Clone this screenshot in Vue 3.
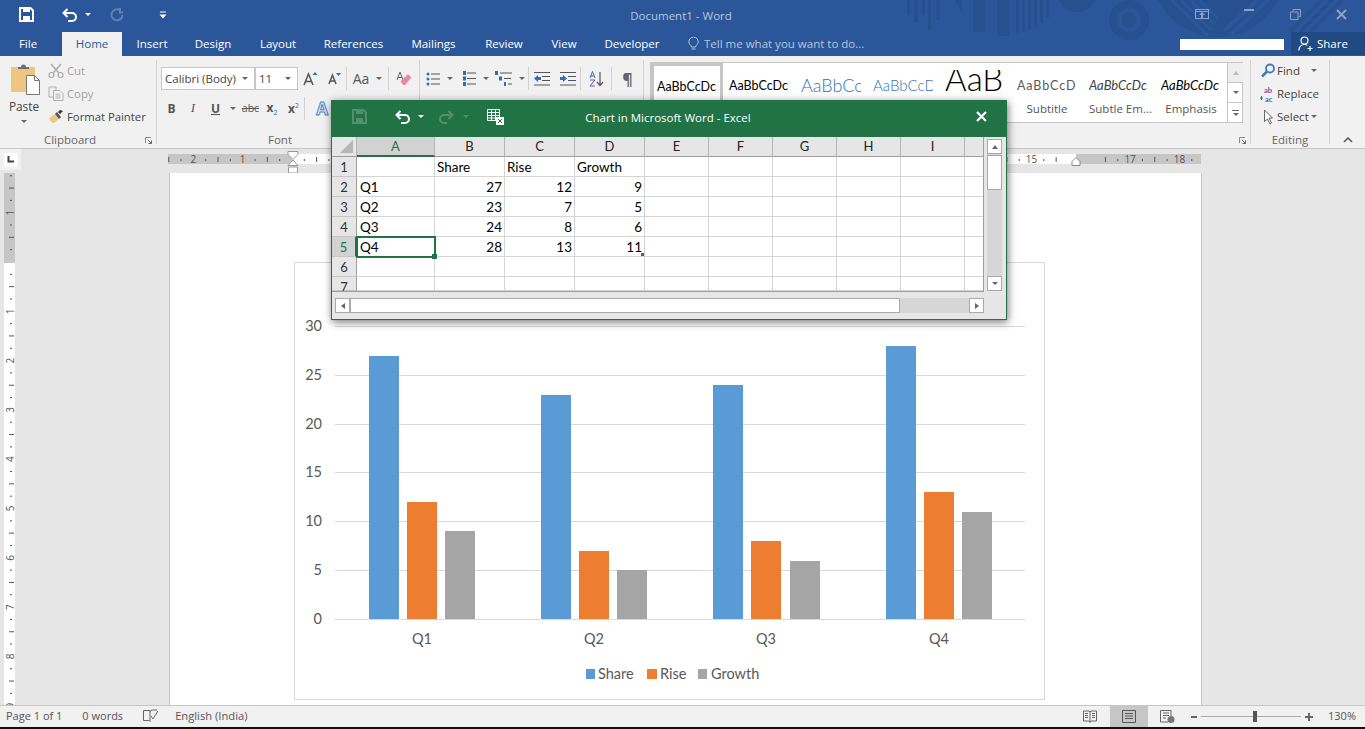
<script setup>
const tabs = ['File', 'Home', 'Insert', 'Design', 'Layout', 'References', 'Mailings', 'Review', 'View', 'Developer']

const styles = [
  { id: 1, name: '', text: 'AaBbCcDc', cls: 'st-normal sel' },
  { id: 2, name: '', text: 'AaBbCcDc', cls: 'st-normal' },
  { id: 3, name: '', text: 'AaBbCc', cls: 'st-h1' },
  { id: 4, name: '', text: 'AaBbCcD', cls: 'st-h2' },
  { id: 5, name: '', text: 'AaB', cls: 'st-title' },
  { id: 6, name: 'Subtitle', text: 'AaBbCcD', cls: 'st-sub' },
  { id: 7, name: 'Subtle Em...', text: 'AaBbCcDc', cls: 'st-em st-subtle' },
  { id: 8, name: 'Emphasis', text: 'AaBbCcDc', cls: 'st-em' }
]

function hTicks() {
  const out = []
  for (let k = -10; k <= 73; k++) {
    const x = 292 + k * 12.325
    if (k === 0 || k === 64 || k === 63 || k === 65) continue
    if (k % 4 === 0) {
      if (x < 331 || x > 1007) out.push({ x, label: Math.abs(k / 4) })
    } else if (k % 2 === 0) out.push({ x, long: true })
    else out.push({ x })
  }
  return out
}
function vTicks() {
  const out = []
  for (let k = -7; k <= 36; k++) {
    const y = 262 + k * 12.325
    if (k === 0) continue
    if (k % 4 === 0) out.push({ y, label: Math.abs(k / 4) })
    else if (k % 2 === 0) out.push({ y, long: true })
    else out.push({ y })
  }
  return out
}
const rulerH = hTicks()
const rulerV = vTicks()

const columns = ['A', 'B', 'C', 'D', 'E', 'F', 'G', 'H', 'I', '']
const sheet = [
  ['', 'Share', 'Rise', 'Growth'],
  ['Q1', 27, 12, 9],
  ['Q2', 23, 7, 5],
  ['Q3', 24, 8, 6],
  ['Q4', 28, 13, 11],
  [],
  []
]
function cellsOf(row) {
  return columns.map((_, i) => (row[i] === undefined ? '' : row[i]))
}

const groups = [
  { label: 'Q1', xs: [369, 407, 445], values: [27, 12, 9] },
  { label: 'Q2', xs: [541, 579, 617], values: [23, 7, 5] },
  { label: 'Q3', xs: [713, 751, 790], values: [24, 8, 6] },
  { label: 'Q4', xs: [886, 924, 962], values: [28, 13, 11] }
]
const seriesColors = ['#5b9bd5', '#ed7d31', '#a5a5a5']
const zero = 619
const gridValues = [30, 25, 20, 15, 10, 5, 0]
function gridY(v) {
  return Math.round(zero - v * 9.77) + 0.5
}
function barTop(v) {
  return Math.round(zero - v * 9.75)
}
const decoBars = [
  [907, 3, 15], [914, 4, 23], [922, 3, 15], [928, 3, 30], [936, 4, 20],
  [973, 12, 32], [997, 12, 36], [1016, 3, 34], [1022, 3, 32], [1028, 3, 30], [1034, 3, 27], [1040, 3, 23], [1046, 3, 18]
]
</script>

<template>
  <div class="word">
    <header class="top">
      <svg class="deco" width="475" height="56" viewBox="890 0 475 56">
        <g fill="#26508f">
          <rect v-for="b in decoBars" :key="b[0]" :x="b[0]" y="0" :width="b[1]" :height="b[2]" />
          <polygon points="955,0 962,0 962,12" />
          <circle cx="1077" cy="-8" r="20" />
          <circle cx="1218" cy="-30" r="67" />
        </g>
        <circle cx="1129" cy="20" r="16" fill="none" stroke="#26508f" stroke-width="8" />
        <circle cx="1129" cy="20" r="7.500" fill="#26508f" />
        <g stroke="#2b579a" stroke-width="3">
          <path d="M1172 0l36 36M1181 0l30 30M1190 0l24 24M1199 0l18 18" />
          <path d="M1268 0l-40 37M1258 0l-34 31" stroke-width="4" />
        </g>
        <g stroke="#26508f" stroke-width="4">
          <path d="M1300 32L1336 -4M1310 32L1346 -4M1290 32L1326 -4" />
        </g>
      </svg>

      <div class="titlebar">
        <div class="qat">
          <svg class="q-save" width="15" height="15" viewBox="0 0 15 15"><path d="M1 1h10.5L14 3.5V14H1z" fill="none" stroke="#fff" stroke-width="2" /><rect x="4" y="1" width="7" height="4" fill="#fff" /><rect x="4" y="9" width="7" height="5" fill="#fff" /></svg>
          <svg class="q-undo" width="15" height="14" viewBox="0 0 15 14"><path d="M5.5 1L1.5 5l4 4M2 5h8a3.6 3.6 0 0 1 0 8H6" fill="none" stroke="#fff" stroke-width="2" /></svg>
          <span class="caret white q-caret"></span>
          <svg class="q-redo" width="14" height="14" viewBox="0 0 14 14"><path d="M10 2.2A5.5 5.5 0 1 0 12.5 7M10 0v4.5h3" fill="none" stroke="#5f80b3" stroke-width="2" /></svg>
          <svg class="q-more" width="8" height="8" viewBox="0 0 8 8"><path d="M1 1h6" stroke="#fff" stroke-width="1" /><path d="M0.5 3.5h7L4 7.5z" fill="#fff" /></svg>
        </div>
        <div class="doc-title">Document1 - Word</div>
        <div class="win-controls">
          <span class="ctl"><svg width="14" height="11" viewBox="0 0 14 11"><rect x=".5" y=".5" width="13" height="9" fill="none" stroke="#8aa3c8" /><path d="M0 2.5h14" stroke="#8aa3c8" /><path d="M7 3l3 3H8v3H6V6H4z" fill="#8aa3c8" /></svg></span>
          <span class="ctl"><svg width="10" height="2" viewBox="0 0 10 2"><rect width="10" height="2" fill="#8aa3c8" /></svg></span>
          <span class="ctl"><svg width="11" height="11" viewBox="0 0 11 11"><path d="M3 2.5V.5h7.5v7H8.5M.5 3h7.5v7.5H.5z" fill="none" stroke="#8aa3c8" /></svg></span>
          <span class="ctl"><svg width="11" height="11" viewBox="0 0 11 11"><path d="M1 1l9 9M10 1l-9 9" stroke="#8aa3c8" stroke-width="2" /></svg></span>
        </div>
      </div>

      <div class="tabrow">
        <nav class="tabs">
          <span v-for="t in tabs" :key="t" class="tab" :class="{ active: t === 'Home', file: t === 'File' }">{{ t }}</span>
        </nav>
        <div class="tell">
          <svg width="11" height="14" viewBox="0 0 11 14"><path d="M3.5 10C3 8 .8 7.2.8 4.8a4.7 4.7 0 0 1 9.4 0C10.200 7.200 8 8 7.500 10zM3.500 12h4" fill="none" stroke="#b4c5df" /></svg>
          <span>Tell me what you want to do...</span>
        </div>
        <div class="redact"></div>
        <div class="share">
          <svg width="15" height="15" viewBox="0 0 15 15"><circle cx="6.500" cy="4.500" r="3.500" fill="none" stroke="#fff" stroke-width="1.200" /><path d="M.8 14.500c.4-4 2.600-6 5.700-6 1 0 2 .2 2.700.7M9.500 12.500h5M12 10v5" fill="none" stroke="#fff" stroke-width="1.200" /></svg>
          <span>Share</span>
        </div>
      </div>
    </header>

    <section class="ribbon">
      <div class="group g-clip">
        <div class="g-body clip-body">
          <div class="paste">
            <svg width="31" height="31" viewBox="0 0 31 31">
              <rect x="1" y="3" width="24" height="25" rx="1" fill="#eec680" />
              <path d="M8 5V3h3a2.500 2.500 0 0 1 5 0h3v2z" fill="#6e6e6e" />
              <path d="M16.500 11.500h8l5 5v14h-13z" fill="#fff" stroke="#777" />
              <path d="M24.500 11.500v5h5" fill="none" stroke="#777" />
            </svg>
            <span class="paste-label">Paste</span>
            <span class="caret"></span>
          </div>
          <div class="clip-list">
            <div class="mini dim">
              <svg width="16" height="15" viewBox="0 0 16 15"><path d="M3 1l8 9M13 1l-8 9" stroke="#a8a8a8" stroke-width="1.300" /><circle cx="3.500" cy="12" r="2.500" fill="none" stroke="#a8a8a8" stroke-width="1.200" /><circle cx="12.500" cy="12" r="2.500" fill="none" stroke="#a8a8a8" stroke-width="1.200" /></svg>
              <span>Cut</span>
            </div>
            <div class="mini dim">
              <svg width="16" height="15" viewBox="0 0 16 15"><path d="M1 1h7v3M5 11H1V1" fill="none" stroke="#b0b0b0" /><path d="M5.500 4.500H12l3 3v7H5.500z" fill="#f4f4f4" stroke="#b0b0b0" /><path d="M7.500 8h5M7.500 10h5M7.500 12h5" stroke="#b0b0b0" /></svg>
              <span>Copy</span>
            </div>
            <div class="mini">
              <svg width="16" height="15" viewBox="0 0 16 15"><path d="M1 9l6-4 4 5-5 4C4 14 2 12 1 9z" fill="#eec680" /><path d="M7 5l4 5 2-2-4-5z" fill="#555" /><path d="M10 3l2-2 3 1-3 3z" fill="#333" /></svg>
              <span>Format Painter</span>
            </div>
          </div>
        </div>
        <div class="g-label l-clip">Clipboard
          <svg class="launcher" width="7" height="7" viewBox="0 0 7 7"><path d="M.5 6V.5H6" fill="none" stroke="#888" /><path d="M3 3l3.500 3.500M6.500 3.500v3h-3" fill="none" stroke="#666" /></svg>
        </div>
      </div>

      <div class="group g-font">
        <div class="g-body">
          <div class="f-row1">
            <div class="combo"><span>Calibri (Body)</span><span class="caret"></span></div>
            <div class="combo combo-size"><span>11</span><span class="caret"></span></div>
            <span class="btn">
              <svg width="16" height="15" viewBox="0 0 16 15"><path d="M1 14L5.500 3 10 14M2.800 10.500h5.400" fill="none" stroke="#555" stroke-width="1.500" /><path d="M9.500 4l2.500-3 2.500 3z" fill="#2b6cb5" /></svg>
            </span>
            <span class="btn">
              <svg width="14" height="13" viewBox="0 0 14 13"><path d="M1 12L4.500 3 8 12M2.300 9h4.400" fill="none" stroke="#555" stroke-width="1.500" /><path d="M8 1h5l-2.500 3z" fill="#2b6cb5" /></svg>
            </span>
            <span class="vsep"></span>
            <span class="btn aa"><span>Aa</span><span class="caret"></span></span>
            <span class="vsep"></span>
            <span class="btn">
              <svg width="16" height="15" viewBox="0 0 16 15"><path d="M1 9L4 1l3 8M2 6.500h4" fill="none" stroke="#666" /><path d="M4.500 10.500l7.500-7.500 3.500 3.500-6.500 7.500H7z" fill="#ea8a9a" /></svg>
            </span>
          </div>
          <div class="f-row2">
            <span class="fmt bold">B</span>
            <span class="fmt ital">I</span>
            <span class="fmt under"><u>U</u><span class="caret"></span></span>
            <span class="fmt strike">abc</span>
            <span class="fmt script">x<sub>2</sub></span>
            <span class="fmt script">x<sup>2</sup></span>
            <span class="vsep"></span>
            <span class="fmt big-a">A</span>
          </div>
        </div>
        <div class="g-label l-font">Font</div>
      </div>

      <div class="group g-para">
        <div class="g-body">
          <div class="p-row1">
            <span class="btn">
              <svg width="14" height="14" viewBox="0 0 14 14"><g fill="#2f6fb5"><circle cx="2" cy="2" r="1.500" /><circle cx="2" cy="7" r="1.500" /><circle cx="2" cy="12" r="1.500" /></g><path d="M5 2h9M5 7h9M5 12h9" stroke="#555" /></svg>
              <span class="caret"></span>
            </span>
            <span class="btn">
              <svg width="14" height="15" viewBox="0 0 14 15"><g fill="#2f6fb5"><rect x="1" y="0" width="3" height="4" /><rect x="1" y="5.500" width="3" height="4" /><rect x="1" y="11" width="3" height="4" /></g><path d="M5 2h9M5 7.500h9M5 13h9" stroke="#555" /></svg>
              <span class="caret"></span>
            </span>
            <span class="btn">
              <svg width="17" height="15" viewBox="0 0 17 15"><g fill="#2f6fb5"><rect x="0" y="0" width="3" height="4" /><rect x="4" y="5.500" width="3" height="4" /><rect x="9" y="11" width="2" height="4" /></g><path d="M5 2h12M9 7.500h7M13 13h4" stroke="#555" /></svg>
              <span class="caret"></span>
            </span>
            <span class="vsep"></span>
            <span class="btn">
              <svg width="16" height="14" viewBox="0 0 16 14"><path d="M0 .5h16M8 4.500h8M8 8.500h8M0 13h16" stroke="#555" /><path d="M0 6.500L4 3v2h3v3H4v2z" fill="#2f6fb5" /></svg>
            </span>
            <span class="btn">
              <svg width="16" height="14" viewBox="0 0 16 14"><path d="M0 .5h16M8 4.500h8M8 8.500h8M0 13h16" stroke="#555" /><path d="M7 6.500L3 3v2H0v3h3v2z" fill="#2f6fb5" /></svg>
            </span>
            <span class="vsep"></span>
            <span class="btn">
              <svg width="15" height="16" viewBox="0 0 15 16"><path d="M1 7l2.500-6.500L6 7M1.800 5h3.400" fill="none" stroke="#2f6fb5" /><path d="M1 9h5L1 15h5" fill="none" stroke="#7a4fa8" /><path d="M11 1v13M8 11l3 3.500 3-3.500" fill="none" stroke="#555" stroke-width="1.200" /></svg>
            </span>
            <span class="vsep"></span>
            <span class="btn pil">¶</span>
          </div>
        </div>
      </div>

      <div class="group g-styles">
        <div class="g-body">
          <div class="gallery">
            <div v-for="s in styles" :key="s.id" class="style" :class="s.cls">
              <div class="st-sample">{{ s.text }}</div>
              <div class="st-name">{{ s.name }}</div>
            </div>
            <div class="g-scroll">
              <span class="gs-btn"><span class="caret up faint"></span></span>
              <span class="gs-btn"><span class="caret"></span></span>
              <span class="gs-btn gs-more"><i></i><span class="caret"></span></span>
            </div>
          </div>
        </div>
        <div class="g-label">
          <svg class="launcher" width="7" height="7" viewBox="0 0 7 7"><path d="M.5 6V.5H6" fill="none" stroke="#888" /><path d="M3 3l3.500 3.500M6.500 3.500v3h-3" fill="none" stroke="#666" /></svg>
        </div>
      </div>

      <div class="group g-edit">
        <div class="g-body edit-list">
          <div class="mini">
            <svg width="15" height="15" viewBox="0 0 15 15"><circle cx="9.500" cy="5.500" r="4" fill="none" stroke="#3f7ab8" stroke-width="1.800" /><path d="M6.500 8.500L1.500 13.500" stroke="#3f7ab8" stroke-width="2.500" /></svg>
            <span>Find</span><span class="caret find-caret"></span>
          </div>
          <div class="mini">
            <svg class="rep" width="16" height="16" viewBox="0 0 16 16"><text x="4" y="6.500" class="rep-a">ab</text><text x="5" y="15.500" class="rep-b">ac</text><path d="M0 12h3M1.500 10v4" stroke="#2f6fb5" /></svg>
            <span>Replace</span>
          </div>
          <div class="mini">
            <svg width="15" height="16" viewBox="0 0 15 16"><path d="M4 1v11.500l3-2.500 2.500 5 1.500-1-2.500-5H12z" fill="#fff" stroke="#666" /></svg>
            <span>Select</span><span class="caret sel-caret"></span>
          </div>
        </div>
        <div class="g-label">Editing</div>
      </div>

      <div class="collapse">
        <svg width="10" height="6" viewBox="0 0 10 6"><path d="M1 5l4-4 4 4" fill="none" stroke="#555" stroke-width="1.500" /></svg>
      </div>
    </section>

    <div class="rulerbar">
      <div class="corner"><span><svg width="7" height="7" viewBox="0 0 7 7"><path d="M1.500 0v5.500H7" fill="none" stroke="#444" stroke-width="2" /></svg></span></div>
      <svg class="hruler" width="1033" height="24" viewBox="168 149 1033 24">
        <rect x="168" y="154" width="1033" height="10" fill="#c6c6c6" />
        <rect x="292" y="154" width="784" height="10" fill="#fff" />
        <template v-for="t in rulerH" :key="t.x">
          <text v-if="t.label" :x="t.x" y="163" class="rtext" text-anchor="middle">{{ t.label }}</text>
          <path v-else-if="t.long" :d="`M${t.x} 157v5`" stroke="#555" />
          <path v-else :d="`M${t.x} 159v2`" stroke="#555" />
        </template>
        <path d="M288 151.500h10v3l-5 5-5-5zM288 165.500l5-5.500 5 5.500zM288.500 167h9v6h-9z" fill="#fff" stroke="#999" />
        <path d="M1072 165.500v-4l4-4 4 4v4z" fill="#fff" stroke="#888" />
      </svg>
    </div>

    <main class="work">
      <svg class="vruler" width="21" height="533" viewBox="0 173 21 533">
        <rect x="4" y="173" width="11" height="533" fill="#fff" />
        <rect x="4" y="173" width="11" height="90" fill="#c6c6c6" />
        <template v-for="t in rulerV" :key="t.y">
          <text v-if="t.label" class="rtext" text-anchor="middle" :transform="`translate(13.500 ${t.y}) rotate(-90)`">{{ t.label }}</text>
          <path v-else-if="t.long" :d="`M9 ${t.y}h5`" stroke="#555" />
          <path v-else :d="`M10 ${t.y}h2`" stroke="#555" />
        </template>
      </svg>
      <div class="doc">
        <div class="page">
          <div class="chart">
            <svg width="749" height="436" viewBox="295 263 749 436">
              <g v-for="v in gridValues" :key="v">
                <line x1="335" x2="1025" :y1="gridY(v)" :y2="gridY(v)" stroke="#d9d9d9" />
                <text x="322" :y="gridY(v) + 4.500" text-anchor="end" class="ctext">{{ v }}</text>
              </g>
              <g v-for="g in groups" :key="g.label">
                <rect
                  v-for="(val, i) in g.values"
                  :key="i"
                  :x="g.xs[i]"
                  :y="barTop(val)"
                  width="30"
                  :height="zero - barTop(val)"
                  :fill="seriesColors[i]"
                />
                <text :x="g.xs[0] + 53" y="644" text-anchor="middle" class="ctext">{{ g.label }}</text>
              </g>
              <rect x="586" y="669" width="9" height="10" :fill="seriesColors[0]" />
              <text x="598" y="679" class="ctext">Share</text>
              <rect x="647" y="669" width="10" height="10" :fill="seriesColors[1]" />
              <text x="660" y="679" class="ctext">Rise</text>
              <rect x="698" y="669" width="9" height="10" :fill="seriesColors[2]" />
              <text x="711" y="679" class="ctext">Growth</text>
            </svg>
          </div>
        </div>
      </div>
    </main>

    <footer class="status">
      <span class="s-page">Page 1 of 1</span>
      <span class="s-words">0 words</span>
      <svg class="s-proof" width="15" height="13" viewBox="0 0 15 13"><path d="M7 1.500H.5v10H6l1 1V1.500zM7 2.500l2-1.500h5" fill="none" stroke="#666" /><path d="M8 7l2 3 5-8" fill="none" stroke="#666" /></svg>
      <span class="s-lang">English (India)</span>
      <div class="s-right">
        <svg class="s-read" width="14" height="13" viewBox="0 0 14 13"><path d="M.5 1h5.500l1 1 1-1h5.500v10H8l-1 1.500L6 11H.5zM7 2v10M2 3.500h3M2 5.500h3M2 7.500h3M9 3.500h3M9 5.500h3M9 7.500h3" fill="none" stroke="#666" /></svg>
        <span class="s-active"><svg width="14" height="13" viewBox="0 0 14 13"><path d="M.5.500h13v12H.5zM3 3.500h8M3 6h8M3 8.500h8" fill="none" stroke="#555" /></svg></span>
        <svg class="s-web" width="15" height="13" viewBox="0 0 15 13"><path d="M8 12H.5V.5H11V6M3 3h6M3 5.500h6M3 8h3" fill="none" stroke="#666" /><circle cx="11" cy="9.500" r="3.500" fill="#777" /></svg>
        <span class="z-minus"></span>
        <div class="slider"><i></i></div>
        <span class="z-plus"></span>
        <span class="s-zoom">130%</span>
      </div>
    </footer>
    <div class="blackline"></div>

    <aside class="xl">
      <div class="xl-title">
        <div class="xl-tools">
          <svg class="xl-save" width="15" height="15" viewBox="0 0 15 15"><path d="M1 1h10.500L14 3.500V14H1z" fill="none" stroke="#52906f" stroke-width="2" /><rect x="4" y="1" width="7" height="4" fill="#52906f" /><rect x="4" y="9" width="7" height="5" fill="#52906f" /></svg>
          <svg class="xl-undo" width="15" height="14" viewBox="0 0 15 14"><path d="M5.500 1L1.500 5l4 4M2 5h8a3.600 3.600 0 0 1 0 8H6" fill="none" stroke="#fff" stroke-width="2" /></svg>
          <span class="caret white xl-c1"></span>
          <svg class="xl-redo" width="15" height="14" viewBox="0 0 15 14"><path d="M9.500 1l4 4-4 4M13 5H5a3.600 3.600 0 0 0 0 8h3" fill="none" stroke="#52906f" stroke-width="2" /></svg>
          <span class="caret dimgreen xl-c2"></span>
          <svg class="xl-table" width="17" height="16" viewBox="0 0 17 16"><path d="M.5.500h12v11H.5zM.5 3.500h12M.5 6.500h12M.5 9h12M4.500.5v11M8.500.5v11" fill="none" stroke="#fff" /><rect x="9" y="8" width="8" height="8" fill="#fff" /><path d="M11 10l4 4M15 10l-4 4" stroke="#217346" /></svg>
        </div>
        <div class="xl-name">Chart in Microsoft Word - Excel</div>
        <div class="xl-close"><svg width="11" height="11" viewBox="0 0 11 11"><path d="M1 1l9 9M10 1l-9 9" stroke="#fff" stroke-width="2.200" /></svg></div>
      </div>
      <div class="xl-body">
        <div class="xl-left">
          <div class="sheet">
            <div class="hcell corner-cell"><i></i></div>
            <div v-for="c in columns" :key="'h' + c" class="hcell" :class="{ on: c === 'A' }">{{ c }}</div>
            <template v-for="(row, r) in sheet" :key="r">
              <div class="rcell" :class="{ on: r === 4 }">{{ r + 1 }}</div>
              <div
                v-for="(v, c) in cellsOf(row)"
                :key="c"
                class="cell"
                :class="{ num: typeof v === 'number', first: c === 0, active: r === 4 && c === 0, tail: r === 4 && c === 3 }"
              >{{ v }}</div>
            </template>
          </div>
          <div class="hscroll">
            <span class="sb-btn"><span class="tri-l"></span></span>
            <span class="h-thumb"></span>
            <span class="sb-btn"><span class="tri-r"></span></span>
          </div>
        </div>
        <div class="vscroll">
          <span class="sb-btn"><span class="caret up"></span></span>
          <span class="v-thumb"></span>
          <span class="sb-btn sb-end"><span class="caret"></span></span>
        </div>
      </div>
    </aside>
  </div>
</template>

<style scoped>
.word {
  position: relative;
  width: 1365px;
  height: 729px;
  overflow: hidden;
  display: flex;
  flex-direction: column;
  background: #e6e6e6;
  font-family: "Open Sans", "Noto Sans", sans-serif;
  font-size: 11.5px;
  color: #444;
}
svg { display: block; flex: none; }

.caret {
  display: inline-block;
  width: 0;
  height: 0;
  flex: none;
  border-left: 3px solid transparent;
  border-right: 3px solid transparent;
  border-top: 3px solid #666;
}
.caret.up { border-top: 0; border-bottom: 4px solid #666; }
.caret.faint { border-bottom-color: #bbb; }
.caret.white { border-top-color: #fff; }
.caret.dimgreen { border-top-color: #52906f; }

/* header */
.top { position: relative; height: 56px; background: #2b579a; flex: none; }
.deco { position: absolute; right: 0; top: 0; }
.titlebar {
  position: relative;
  height: 32px;
  display: grid;
  grid-template-columns: 1fr auto 1fr;
  align-items: center;
}
.qat { display: flex; align-items: center; padding-left: 19px; margin-top: -3px; }
.q-undo { margin-left: 28px; }
.q-caret { margin-left: 8px; }
.q-redo { margin-left: 19px; }
.q-more { margin-left: 35px; }
.doc-title { color: #b6c6df; font-size: 11.5px; margin-top: -1px; padding-right: 3px; }
.win-controls { display: flex; justify-content: flex-end; margin-top: -4px; }
.ctl { width: 46.500px; display: flex; justify-content: center; }
.tabrow { position: relative; height: 24px; display: flex; }
.tabs {
  display: grid;
  grid-template-columns: 62px 60px 60px 62px 68px 83px 77px 64px 56px 80px;
  width: 672px;
}
.tab { color: #fff; text-align: center; line-height: 23px; font-size: 11.5px; }
.tab.active { background: #f1f1f1; color: #2b579a; }
.tab.file { padding-right: 6px; }
.tell {
  display: flex;
  align-items: center;
  gap: 5px;
  margin-left: 16px;
  width: 492px;
  color: #b6c6df;
  font-size: 11.5px;
  margin-top: -1px;
}
.redact { width: 104px; height: 11px; background: #fff; margin-top: 7px; }
.share {
  margin-left: 7px;
  width: 74px;
  height: 23px;
  background: #1f4a83;
  color: #fff;
  display: flex;
  align-items: center;
  gap: 4px;
  padding-left: 7px;
  box-sizing: border-box;
  font-size: 11.5px;
}

/* ribbon */
.ribbon {
  height: 93px;
  flex: none;
  box-sizing: border-box;
  background: #f1f1f1;
  border-bottom: 1px solid #c6c6c6;
  display: flex;
  padding-top: 4px;
}
.group {
  height: 84px;
  display: flex;
  flex-direction: column;
  box-sizing: border-box;
  border-right: 1px solid #d2d2d2;
  flex: none;
}
.g-body { flex: 1; min-height: 0; }
.g-label {
  position: relative;
  height: 16px;
  margin-bottom: -4px;
  text-align: center;
  line-height: 16px;
  color: #666;
  font-size: 11.5px;
}
.l-clip { padding-right: 16px; }
.l-font { padding-right: 20px; }
.launcher { position: absolute; right: 4px; top: 5px; }

.g-clip { width: 157px; }
.clip-body { display: flex; }
.paste {
  width: 48px;
  display: flex;
  flex-direction: column;
  align-items: center;
  padding-top: 4px;
}
.paste svg { margin-left: 2px; }
.paste-label { margin-top: 3px; line-height: 16px; color: #444; font-size: 11.800px; }
.paste .caret { margin-top: 6px; }
.clip-list { display: flex; flex-direction: column; margin-top: -1px; }
.mini { display: flex; align-items: center; height: 23px; gap: 3px; white-space: nowrap; font-size: 11.300px; }
.mini.dim { color: #a3a3a3; }

.g-font { width: 263px; padding-left: 4px; }
.f-row1 {
  display: grid;
  grid-template-columns: 94px 43px 26px 22px 1px 41px 1px 30px;
  height: 23px;
  margin-top: 7px;
  align-items: center;
}
.combo {
  height: 23px;
  box-sizing: border-box;
  background: #fff;
  border: 1px solid #c6c6c6;
  display: flex;
  align-items: center;
  justify-content: space-between;
  padding: 0 6px 0 3px;
  font-size: 11.500px;
  color: #444;
  white-space: nowrap;
}
.btn { display: flex; align-items: center; justify-content: center; gap: 7px; }
.vsep { width: 1px; height: 23px; background: #d2d2d2; display: block; }
.aa { font-size: 14px; color: #555; }
.f-row2 {
  display: grid;
  grid-template-columns: 21px 22px 36px 21px 22px 21px 1px 30px;
  height: 24px;
  margin-top: 6px;
  align-items: center;
  column-gap: 0;
}
.fmt { text-align: center; color: #555; font-size: 12px; }
.bold { font-weight: 700; }
.ital { font-style: italic; font-family: "Liberation Serif", serif; font-size: 13px; }
.under { display: flex; align-items: center; justify-content: flex-start; gap: 10px; padding-left: 7px; font-weight: 700; }
.strike { text-decoration: line-through; font-size: 10.500px; }
.script { font-weight: 700; }
.script sub, .script sup { font-size: 7px; color: #2f6fb5; font-weight: 400; }
.big-a { font-size: 17px; font-weight: 700; color: #d6e6f6; -webkit-text-stroke: 1px #4f87c0; margin-left: 4px; }

.g-para { width: 224px; }
.p-row1 {
  display: grid;
  grid-template-columns: 38px 34px 36px 1px 26px 25px 1px 30px 1px 31px;
  height: 23px;
  margin-top: 7px;
  align-items: center;
}
.pil { font-size: 16px; color: #666; font-weight: 700; }

.g-styles { width: 607px; padding-left: 6px; }
.gallery {
  display: flex;
  height: 61px;
  width: 593px;
  box-sizing: border-box;
  margin-top: 2px;
  background: #fff;
  border: 1px solid #c6c6c6;
}
.style {
  width: 72px;
  flex: none;
  box-sizing: border-box;
  padding: 2px 6px 0;
  overflow: hidden;
  text-align: center;
}
.style.sel { border: 3px solid #c6c6c6; padding: 0 3px; }
.st-sample {
  height: 34px;
  line-height: 41px;
  overflow: hidden;
  white-space: nowrap;
  text-align: left;
  font-family: Lato, "Liberation Sans", sans-serif;
  font-size: 12.500px;
  color: #000;
}
.st-name { font-size: 11.500px; color: #555; line-height: 20px; white-space: nowrap; }
.st-h1 .st-sample { font-size: 18px; color: #2e74b5; font-weight: 300; line-height: 40px; }
.st-h2 .st-sample { font-size: 15px; color: #2e74b5; font-weight: 300; line-height: 40px; }
.st-title .st-sample { font-size: 33px; font-weight: 300; line-height: 16px; height: 28px; margin-top: 5px; padding-top: 0; }
.st-sub .st-sample { color: #5a5a5a; letter-spacing: .9px; }
.st-em .st-sample { font-style: italic; font-size: 13px; }
.st-subtle .st-sample { color: #404040; }
.g-scroll { width: 15px; flex: none; display: flex; flex-direction: column; border-left: 1px solid #c6c6c6; }
.gs-btn {
  flex: 1;
  display: flex;
  flex-direction: column;
  align-items: center;
  justify-content: center;
  border-bottom: 1px solid #c6c6c6;
  gap: 2px;
}
.gs-btn:first-child { background: #eee; }
.gs-btn:last-child { border-bottom: 0; }
.gs-more i { width: 7px; height: 1px; background: #666; }

.g-edit { width: 79px; }
.edit-list { display: flex; flex-direction: column; padding-left: 9px; margin-top: -1px; }
.edit-list .mini { gap: 1px; font-size: 11.500px; }
.edit-list .mini svg { width: 16px; }
.find-caret { margin-left: 10px; }
.sel-caret { margin-left: 1px; }
.rep-a { font: 700 7.500px Lato, sans-serif; fill: #7a4fa8; }
.rep-b { font: 700 7.500px Lato, sans-serif; fill: #2f6fb5; }
.collapse { flex: 1; display: flex; justify-content: center; align-items: flex-end; padding-bottom: 5px; padding-right: 0; }

/* rulers */
.rulerbar { height: 24px; flex: none; display: flex; background: #e6e6e6; }
.corner { width: 21px; height: 21px; background: #f1f1f1; display: flex; align-items: center; justify-content: center; }
.corner span { width: 14px; height: 14px; background: #fff; display: flex; align-items: center; justify-content: center; }
.hruler { margin-left: 147px; }
.rtext { font: 10px "Open Sans", sans-serif; fill: #555; }
.work { flex: 1; min-height: 0; display: flex; overflow: hidden; border-bottom: 1px solid #c6c6c6; }
.doc { flex: 1; min-width: 0; overflow: hidden; padding-left: 148px; }
.page {
  width: 1033px;
  height: 560px;
  box-sizing: border-box;
  background: #fff;
  border-left: 1px solid #c6c6c6;
  border-right: 1px solid #c6c6c6;
  padding: 89px 0 0 124px;
}
.chart { width: 751px; height: 438px; box-sizing: border-box; border: 1px solid #d9d9d9; }
.ctext { font: 14.500px Lato, "Liberation Sans", sans-serif; fill: #595959; }

/* status */
.status {
  height: 21px;
  flex: none;
  background: #f1f1f1;
  display: flex;
  align-items: center;
  font-size: 11px;
  color: #555;
  white-space: nowrap;
  padding-left: 6px;
}
.s-page, .s-words, .s-lang { margin-top: -2px; }
.s-words { margin-left: 20px; }
.s-proof { margin-left: 20px; margin-top: -2px; }
.s-lang { margin-left: 17px; font-size: 11.200px; }
.s-right { margin-left: auto; display: flex; align-items: center; height: 21px; }
.s-active { width: 38px; height: 21px; background: #c6c6c6; display: flex; align-items: center; justify-content: center; margin-left: 13px; }
.s-web { margin-left: 12px; }
.z-minus { width: 6px; height: 2px; background: #666; margin-left: 16px; }
.slider { width: 100px; height: 1px; background: #aaa; margin-left: 4px; position: relative; }
.slider i { position: absolute; left: 52px; top: -5px; width: 4px; height: 11px; background: #555; }
.z-plus {
  width: 8px;
  height: 8px;
  margin-left: 4px;
  background: linear-gradient(#666, #666) center / 8px 2px no-repeat, linear-gradient(#666, #666) center / 2px 8px no-repeat;
}
.s-zoom { margin-left: 15px; margin-right: 9px; margin-top: -2px; }
.blackline { height: 2px; background: #111; flex: none; }

/* excel */
.xl {
  position: absolute;
  left: 331px;
  top: 100px;
  width: 676px;
  height: 220px;
  box-sizing: border-box;
  border: 1px solid #217346;
  border-top: 0;
  background: #e6e6e6;
  box-shadow: 1px 2px 8px rgba(0, 0, 0, .55);
  display: flex;
  flex-direction: column;
  font-family: Lato, "Liberation Sans", sans-serif;
}
.xl-title {
  height: 37px;
  flex: none;
  background: #217346;
  display: grid;
  grid-template-columns: 1fr auto 1fr;
  align-items: center;
  color: #fff;
}
.xl-tools { display: flex; align-items: center; padding-left: 20px; margin-top: -4px; }
.xl-undo { margin-left: 28px; }
.xl-c1 { margin-left: 8px; }
.xl-redo { margin-left: 15px; }
.xl-c2 { margin-left: 9px; }
.xl-table { margin-left: 18px; }
.xl-name { font: 11.500px "Open Sans", sans-serif; color: #fff; margin-top: -2px; padding-right: 2px; }
.xl-close { display: flex; justify-content: flex-end; padding-right: 19px; margin-top: -4px; }
.xl-body { flex: 1; min-height: 0; display: flex; }
.xl-left { width: 652px; flex: none; }
.sheet {
  display: grid;
  grid-template-columns: 25px 78px repeat(3, 70px) repeat(5, 64px) 19px;
  grid-template-rows: repeat(7, 20px) 14px;
  background: #fff;
  border-bottom: 1px solid #9e9e9e;
  border-right: 1px solid #9e9e9e;
  box-sizing: border-box;
  width: 652px;
  height: 155px;
  overflow: hidden;
}
.hcell {
  background: #e6e6e6;
  border-right: 1px solid #b5b5b5;
  border-bottom: 1px solid #9e9e9e;
  text-align: center;
  font-size: 13px;
  line-height: 19px;
  color: #222;
}
.hcell.on { background: #d2d2d2; color: #217346; border-bottom: 2px solid #217346; }
.corner-cell { position: relative; }
.corner-cell i {
  position: absolute;
  right: 3px;
  bottom: 3px;
  width: 13px;
  height: 13px;
  background: #b5b5b5;
  clip-path: polygon(100% 0, 100% 100%, 0 100%);
}
.rcell {
  background: #e6e6e6;
  border-right: 1px solid #9e9e9e;
  border-bottom: 1px solid #c6c6c6;
  text-align: center;
  font-size: 13px;
  line-height: 20px;
  color: #333;
}
.rcell.on { background: #d2d2d2; color: #217346; border-right: 2px solid #217346; }
.cell {
  position: relative;
  box-sizing: border-box;
  border-right: 1px solid #d4d4d4;
  border-bottom: 1px solid #d4d4d4;
  font-size: 13.500px;
  line-height: 20px;
  padding: 0 2px;
  color: #000;
  white-space: nowrap;
}
.cell.first { padding-left: 3px; }
.cell.num { text-align: right; }
.cell.active { outline: 2px solid #217346; outline-offset: -1px; z-index: 1; }
.cell.active::after {
  content: "";
  position: absolute;
  right: -3px;
  bottom: -3px;
  width: 5px;
  height: 5px;
  background: #217346;
}
.cell.tail::after {
  content: "";
  position: absolute;
  right: 0;
  bottom: 0;
  width: 3px;
  height: 3px;
  background: #3f5fb5;
}
.hscroll {
  margin: 6px 0 0 3px;
  height: 15px;
  display: flex;
  background: #d6d6d6;
  justify-content: space-between;
  width: 649px;
}
.sb-btn {
  width: 15px;
  height: 15px;
  flex: none;
  box-sizing: border-box;
  background: #fff;
  border: 1px solid #aaa;
  display: flex;
  align-items: center;
  justify-content: center;
}
.h-thumb { margin-right: auto; width: 550px; background: #fff; border: 1px solid #aaa; box-sizing: border-box; }
.tri-l, .tri-r { width: 0; height: 0; border-top: 3px solid transparent; border-bottom: 3px solid transparent; }
.tri-l { border-right: 4px solid #666; }
.tri-r { border-left: 4px solid #666; }
.vscroll {
  margin: 2px 0 0 3px;
  width: 15px;
  height: 152px;
  background: #d6d6d6;
  display: flex;
  flex-direction: column;
}
.v-thumb { height: 35px; margin-top: 1px; background: #fff; border: 1px solid #aaa; box-sizing: border-box; }
.sb-end { margin-top: auto; }
</style>

<style>
html, body { margin: 0; background: #000; }
</style>
